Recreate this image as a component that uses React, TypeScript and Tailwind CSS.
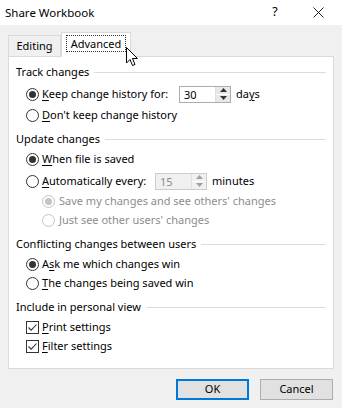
import React from "react";

function Radio({ checked, disabled }: { checked?: boolean; disabled?: boolean }) {
  const border = disabled ? "border-[#c4c4c4]" : "border-[#333333]";
  const dot = disabled ? "bg-[#c4c4c4]" : "bg-[#333333]";
  return (
    <span className={`w-[13px] h-[13px] rounded-full border ${border} bg-white flex items-center justify-center shrink-0`}>
      {checked && <span className={`w-[7px] h-[7px] rounded-full ${dot}`} />}
    </span>
  );
}

function Check() {
  return (
    <span className="w-[13px] h-[13px] border border-[#333333] bg-white flex items-center justify-center shrink-0">
      <svg width="11" height="11" viewBox="0 0 11 11">
        <path d="M1.5 5.5 L4.2 8.2 L9.5 2.5" fill="none" stroke="#333" strokeWidth="1.1" />
      </svg>
    </span>
  );
}

function Heading({ children, className = "" }: { children: React.ReactNode; className?: string }) {
  return (
    <div className={`h-[16px] flex items-center gap-[5px] ${className}`}>
      <span className="whitespace-nowrap">{children}</span>
      <span className="flex-1 h-px bg-[#dcdcdc]" />
    </div>
  );
}

function Spinner({ value, disabled }: { value: string; disabled?: boolean }) {
  return (
    <div className={`w-[52px] h-[17px] border flex shrink-0 ${disabled ? "border-[#cccccc] bg-[#f0f0f0] text-[#8a8a8a]" : "border-[#adadad] bg-white text-black"}`}>
      <div className="flex-1 pl-[4px] flex items-center leading-none">{value}</div>
      <div className="w-[15px] flex flex-col border-l border-[#e0e0e0]">
        <div className={`flex-1 flex items-center justify-center ${disabled ? "bg-[#f0f0f0]" : "bg-[#e8e8e8]"} border-b border-[#ffffff]`}>
          <svg width="7" height="4" viewBox="0 0 7 4"><path d="M0 4 L3.5 0 L7 4 Z" fill={disabled ? "#a0a0a0" : "#333"} /></svg>
        </div>
        <div className={`flex-1 flex items-center justify-center ${disabled ? "bg-[#f0f0f0]" : "bg-[#e8e8e8]"}`}>
          <svg width="7" height="4" viewBox="0 0 7 4"><path d="M0 0 L3.5 4 L7 0 Z" fill={disabled ? "#a0a0a0" : "#333"} /></svg>
        </div>
      </div>
    </div>
  );
}

const U = ({ children }: { children: React.ReactNode }) => <span className="underline underline-offset-2">{children}</span>;

export default function App() {
  return (
    <div
      className="relative w-[342px] h-[408px] bg-[#f0f0f0] text-[11px] text-black overflow-hidden whitespace-nowrap"
      style={{ fontFamily: '"Noto Sans", "Liberation Sans", sans-serif' }}
    >
      {/* Title bar */}
      <div className="h-[25px] bg-white flex items-center">
        <span className="pl-[5px] text-[11.5px] flex-1">Share Workbook</span>
        <span className="w-[14px] text-center mr-[31px] text-[12.5px]">?</span>
        <svg width="11" height="11" viewBox="0 0 11 11" className="mr-[18px]">
          <path d="M0.5 0.5 L10.5 10.5 M10.5 0.5 L0.5 10.5" stroke="#222" strokeWidth="1" />
        </svg>
      </div>

      {/* Tabs */}
      <div className="flex items-end pl-[8px] mt-[6px] h-[25px]">
        <div className="w-[53px] h-[21px] border border-b-0 border-[#dadada] bg-[#f0f0f0] flex items-center justify-center">
          Editing
        </div>
        <div className="relative z-10 w-[70px] h-[25px] -mb-px border border-b-0 border-[#dadada] bg-white flex items-start justify-center pt-[2px]">
          <span className="border border-dotted border-[#333] px-[4px] h-[17px] flex items-center leading-none">Advanced</span>
        </div>
      </div>

      {/* Panel */}
      <div className="mx-[8px] h-[313px] border border-[#dadada] bg-white px-[7px] pt-[7px]">
        <Heading>Track changes</Heading>
        <div className="pl-[10px]">
          <div className="h-[20px] mt-[4px] flex items-center gap-[3px]">
            <Radio checked />
            <span className="w-[134px]"><U>K</U>eep change history for:</span>
            <Spinner value="30" />
            <span className="ml-[2px]">da<U>y</U>s</span>
          </div>
          <div className="h-[20px] mt-[1px] flex items-center gap-[3px]">
            <Radio />
            <span><U>D</U>on't keep change history</span>
          </div>
        </div>

        <Heading className="mt-[6px]">Update changes</Heading>
        <div className="pl-[10px]">
          <div className="h-[20px] mt-[2px] flex items-center gap-[3px]">
            <Radio checked />
            <span><U>W</U>hen file is saved</span>
          </div>
          <div className="h-[20px] mt-[2px] flex items-center gap-[3px]">
            <Radio />
            <span className="w-[110px]"><U>A</U>utomatically every:</span>
            <Spinner value="15" disabled />
            <span className="ml-[2px]">minutes</span>
          </div>
          <div className="h-[19px] mt-[1px] pl-[16px] flex items-center gap-[4px] text-[#8d8d8d]">
            <Radio checked disabled />
            <span>Save my changes and see others' changes</span>
          </div>
          <div className="h-[19px] pl-[16px] flex items-center gap-[4px] text-[#8d8d8d]">
            <Radio disabled />
            <span>Just see other users' changes</span>
          </div>
        </div>

        <Heading className="mt-[6px]">Conflicting changes between users</Heading>
        <div className="pl-[10px]">
          <div className="h-[19px] mt-[3px] flex items-center gap-[3px]">
            <Radio checked />
            <span>A<U>s</U>k me which changes win</span>
          </div>
          <div className="h-[19px] flex items-center gap-[3px]">
            <Radio />
            <span><U>T</U>he changes being saved win</span>
          </div>
        </div>

        <Heading className="mt-[6px]">Include in personal view</Heading>
        <div className="pl-[10px]">
          <div className="h-[19px] mt-[3px] flex items-center gap-[3px]">
            <Check />
            <span><U>P</U>rint settings</span>
          </div>
          <div className="h-[19px] flex items-center gap-[3px]">
            <Check />
            <span><U>F</U>ilter settings</span>
          </div>
        </div>
      </div>

      {/* Buttons */}
      <div className="flex justify-end gap-[11px] pr-[9px] mt-[10px]">
        <button className="w-[73px] h-[21px] border-2 border-[#0078d7] bg-[#e1e1e1] flex items-center justify-center">OK</button>
        <button className="w-[73px] h-[21px] border border-[#adadad] bg-[#e1e1e1] flex items-center justify-center">Cancel</button>
      </div>

      {/* Mouse cursor overlay */}
      <svg className="absolute left-[126px] top-[47px] z-20" width="13" height="20" viewBox="0 0 13 20">
        <path d="M0.5 0.5 L0.5 16 L4 12.5 L6.5 18.5 L9 17.5 L6.5 11.5 L11.5 11.5 Z" fill="white" stroke="black" strokeWidth="1" strokeLinejoin="miter" />
      </svg>
    </div>
  );
}
